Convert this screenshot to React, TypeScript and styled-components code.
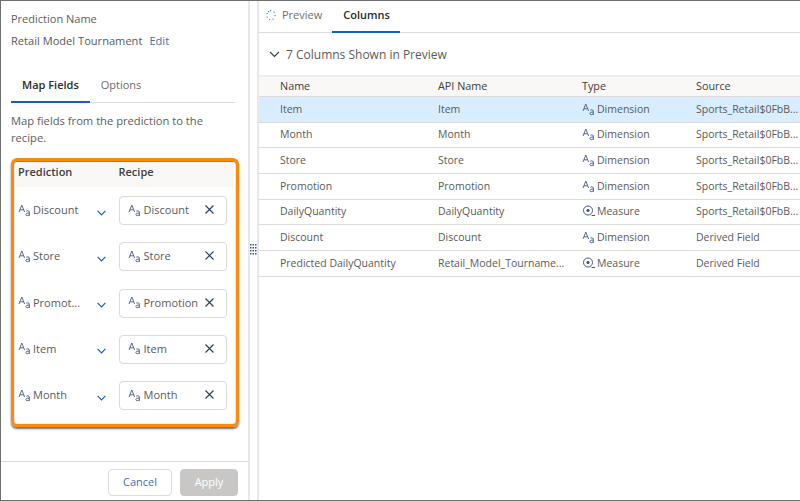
import React from 'react';
import styled, { createGlobalStyle } from 'styled-components';

const GlobalStyle = createGlobalStyle`
    html, body {
        margin: 0;
        padding: 0;
        background: #fff;
        font-family: "Open Sans", "Noto Sans", sans-serif;
        color: #4a4a4a;
    }
`;

const Frame = styled.div`
    box-sizing: border-box;
    display: flex;
    width: 800px;
    height: 501px;
    overflow: hidden;
    border-top: 1px solid #6f6f6f;
    border-left: 1px solid #6f6f6f;
    border-bottom: 1px solid #6f6f6f;
    background: #fff;
`;

const Sidebar = styled.aside`
    box-sizing: border-box;
    display: flex;
    flex-direction: column;
    flex: none;
    width: 247px;
    height: 100%;
`;

const SidebarBody = styled.div`
    flex: 1;
    padding: 11px 12px 0 10px;
`;

const FieldLabel = styled.div`
    font-size: 11px;
    line-height: 14px;
    color: #5e5e5e;
`;

const NameRow = styled.div`
    display: flex;
    gap: 7px;
    margin-top: 8px;
    font-size: 11.1px;
    line-height: 14px;
    color: #5a5a5a;
`;

const EditLink = styled.span`
    color: #3f6ea8;
`;

const Tabs = styled.div`
    display: flex;
    margin-top: 23px;
    width: 224px;
    border-bottom: 1px solid #dddbda;
`;

const SideTab = styled.div<{ $active?: boolean }>`
    box-sizing: border-box;
    height: 32px;
    line-height: 27px;
    padding: 0 11px;
    font-size: 11px;
    margin-bottom: -1px;
    color: ${p => (p.$active ? '#2b2b2b' : '#6d6d6d')};
    font-weight: ${p => (p.$active ? 600 : 400)};
    border-bottom: 2px solid ${p => (p.$active ? '#0f5fc8' : 'transparent')};
`;

const Hint = styled.p`
    margin: 9px 0 0;
    font-size: 11.2px;
    line-height: 17px;
    color: #5e5e5e;
`;

const Highlight = styled.div`
    box-sizing: border-box;
    width: 228px;
    height: 269px;
    margin-top: 12px;
    border: 3px solid #fb8b0c;
    border-radius: 6px;
    box-shadow: 0 2px 2px rgba(50, 50, 50, 0.7), inset 0 1px 1px rgba(40, 40, 40, 0.6), inset 0 0 1px rgba(40, 40, 40, 0.5);
    padding: 1px 0 0 2px;
`;

const MapHead = styled.div`
    display: grid;
    grid-template-columns: 100.500px 1fr;
    height: 25px;
    box-sizing: border-box;
    padding: 0 0 6px 2px;
    margin-right: 2px;
    align-items: center;
    background: #f9f8f7;
    font-size: 11px;
    font-weight: 600;
    color: #3e3e3c;
`;

const MapList = styled.div`
    display: flex;
    flex-direction: column;
    gap: 17.300px;
    margin-top: 9px;
`;

const MapRow = styled.div`
    display: flex;
    align-items: center;
    height: 29px;
    padding-left: 2px;
`;

const Source = styled.div`
    display: flex;
    align-items: center;
    gap: 1px;
    width: 70px;
    padding-bottom: 2px;
    font-size: 11px;
    color: #5a5a5a;
    white-space: nowrap;
`;

const ChevronSlot = styled.div`
    display: flex;
    justify-content: center;
    width: 26px;
    margin-top: 4px;
`;

const Pill = styled.div`
    box-sizing: border-box;
    display: flex;
    align-items: center;
    width: 108px;
    height: 29px;
    margin-left: 4.500px;
    padding: 0 12px 2px 8px;
    gap: 2px;
    border: 1px solid #dddbda;
    border-radius: 4px;
    font-size: 11px;
    color: #5a5a5a;
`;

const PillText = styled.span`
    flex: 1;
    white-space: nowrap;
`;

const Footer = styled.div`
    display: flex;
    justify-content: flex-end;
    gap: 8px;
    height: 39px;
    padding: 7px 10px 0 0;
    box-sizing: border-box;
    border-top: 1px solid #dddbda;
`;

const Button = styled.div<{ $disabled?: boolean }>`
    box-sizing: border-box;
    height: 27px;
    line-height: 23px;
    text-align: center;
    border-radius: 4px;
    font-size: 11px;
    width: ${p => (p.$disabled ? '58px' : '64px')};
    border: 1px solid ${p => (p.$disabled ? '#c9c7c5' : '#dddbda')};
    background: ${p => (p.$disabled ? '#c9c7c5' : '#fff')};
    color: ${p => (p.$disabled ? '#fff' : '#3f6ea8')};
`;

const Gutter = styled.div`
    box-sizing: border-box;
    display: flex;
    align-items: center;
    justify-content: center;
    flex: none;
    width: 11px;
    padding-bottom: 2px;
    background: #fff;
    border-left: 2px solid #e9e8e8;
    border-right: 2px solid #e9e8e8;
`;

const Main = styled.main`
    flex: 1;
    min-width: 0;
`;

const MainTabs = styled.div`
    display: flex;
    height: 32px;
    padding-left: 7px;
    box-sizing: border-box;
    border-bottom: 1px solid #dddbda;
`;

const MainTab = styled.div<{ $active?: boolean }>`
    display: flex;
    align-items: center;
    gap: 6px;
    height: 32px;
    box-sizing: border-box;
    font-size: 11px;
    color: ${p => (p.$active ? '#2b2b2b' : '#6d6d6d')};
    font-weight: ${p => (p.$active ? 600 : 400)};
    padding: ${p => (p.$active ? '0 10px 3px 11px' : '0 10px 3px 0')};
    border-bottom: 2px solid ${p => (p.$active ? '#0f5fc8' : 'transparent')};
`;

const SectionHead = styled.div`
    display: flex;
    align-items: center;
    gap: 6px;
    height: 42px;
    padding-left: 10px;
    font-size: 12px;
    color: #5a5a5a;
`;

const Table = styled.div`
    border-top: 2px solid #eeedec;
`;

const Row = styled.div<{ $head?: boolean; $selected?: boolean }>`
    box-sizing: border-box;
    display: grid;
    grid-template-columns: 158px 144px 114px 1fr;
    align-items: center;
    height: ${p => (p.$head ? '20px' : '25.700px')};
    padding: 0 0 1.500px 21px;
    font-size: ${p => (p.$head ? '10.800px' : '10.500px')};
    white-space: nowrap;
    border-bottom: 1px solid #dddbda;
    color: ${p => (p.$head ? '#3e3e3c' : '#5a5a5a')};
    font-weight: ${p => (p.$head ? 500 : 400)};
    background: ${p => (p.$head ? '#f9f8f7' : p.$selected ? '#d8edff' : '#fff')};
`;

const TypeCell = styled.span`
    display: flex;
    align-items: center;
    gap: 1px;
`;

const TypeGlyph = () => (
    <svg width="14" height="14" viewBox="0 0 14 14" fill="none" stroke="#44598a" strokeWidth="0.9">
        <path d="M1 9 3.8 2 6.6 9M2 6.8h3.6" />
        <path d="M8.2 8.4c.4-.8 3-.9 3.1.5V13M11.3 10.2c-2-.3-3.4.1-3.4 1.4 0 1.500 2.400 1.500 3.400 0" />
    </svg>
);

const MeasureGlyph = () => (
    <svg width="14" height="14" viewBox="0 0 14 14" fill="none" stroke="#44598a" strokeWidth="1">
        <circle cx="6" cy="6.500" r="4.500" />
        <circle cx="6" cy="6.500" r="1.200" fill="#44598a" />
        <path d="M9.500 11.500h3.500" />
    </svg>
);

const Chevron = () => (
    <svg width="9" height="6" viewBox="0 0 9 6" fill="none" stroke="#0f5fc8" strokeWidth="1.200">
        <path d="M.6.8 4.500 4.800 8.400.8" />
    </svg>
);

const Cross = () => (
    <svg width="9" height="9" viewBox="0 0 9 9" fill="none" stroke="#24405f" strokeWidth="1.100">
        <path d="M.5.5 8.500 8.500M8.500.5.500 8.500" />
    </svg>
);

const Grip = () => (
    <svg width="7" height="11" viewBox="0 0 7 11" fill="#3d5688">
        {[0, 3, 6, 9].map(y => [0, 2.500, 5].map(x => <rect key={`${x}-${y}`} x={x} y={y} width="1.500" height="1.500" />))}
    </svg>
);

const Spinner = () => (
    <svg width="10" height="10" viewBox="0 0 10 10" fill="#4c86d0">
        {[[4, 0], [7.500, 1.500], [8.500, 5], [6.500, 8.500], [3, 9], [.5, 6.500], [.5, 3], [2, 1]].map(([x, y]) => (
            <rect key={`${x}-${y}`} x={x} y={y} width="1.200" height="1.200" />
        ))}
    </svg>
);

const mappings = [
    { source: 'Discount', target: 'Discount' },
    { source: 'Store', target: 'Store' },
    { source: 'Promot...', target: 'Promotion' },
    { source: 'Item', target: 'Item' },
    { source: 'Month', target: 'Month' },
];

const retail = 'Sports_Retail$0FbB...';

const columns = [
    { name: 'Item', api: 'Item', type: 'Dimension', source: retail, selected: true },
    { name: 'Month', api: 'Month', type: 'Dimension', source: retail },
    { name: 'Store', api: 'Store', type: 'Dimension', source: retail },
    { name: 'Promotion', api: 'Promotion', type: 'Dimension', source: retail },
    { name: 'DailyQuantity', api: 'DailyQuantity', type: 'Measure', source: retail },
    { name: 'Discount', api: 'Discount', type: 'Dimension', source: 'Derived Field' },
    { name: 'Predicted DailyQuantity', api: 'Retail_Model_Tourname...', type: 'Measure', source: 'Derived Field' },
];

export default function App() {
    return (
        <>
            <GlobalStyle />
            <Frame>
                <Sidebar>
                    <SidebarBody>
                        <FieldLabel>Prediction Name</FieldLabel>
                        <NameRow>
                            Retail Model Tournament <EditLink>Edit</EditLink>
                        </NameRow>
                        <Tabs>
                            <SideTab $active>Map Fields</SideTab>
                            <SideTab>Options</SideTab>
                        </Tabs>
                        <Hint>Map fields from the prediction to the recipe.</Hint>
                        <Highlight>
                            <MapHead>
                                <span>Prediction</span>
                                <span>Recipe</span>
                            </MapHead>
                            <MapList>
                                {mappings.map(m => (
                                    <MapRow key={m.target}>
                                        <Source>
                                            <TypeGlyph />
                                            {m.source}
                                        </Source>
                                        <ChevronSlot>
                                            <Chevron />
                                        </ChevronSlot>
                                        <Pill>
                                            <TypeGlyph />
                                            <PillText>{m.target}</PillText>
                                            <Cross />
                                        </Pill>
                                    </MapRow>
                                ))}
                            </MapList>
                        </Highlight>
                    </SidebarBody>
                    <Footer>
                        <Button>Cancel</Button>
                        <Button $disabled>Apply</Button>
                    </Footer>
                </Sidebar>
                <Gutter>
                    <Grip />
                </Gutter>
                <Main>
                    <MainTabs>
                        <MainTab>
                            <Spinner />
                            Preview
                        </MainTab>
                        <MainTab $active>Columns</MainTab>
                    </MainTabs>
                    <SectionHead>
                        <svg width="11" height="7" viewBox="0 0 11 7" fill="none" stroke="#3e3e3c" strokeWidth="1.200">
                            <path d="M1 1l4.500 4.500L10 1" />
                        </svg>
                        7 Columns Shown in Preview
                    </SectionHead>
                    <Table>
                        <Row $head>
                            <span>Name</span>
                            <span>API Name</span>
                            <span>Type</span>
                            <span>Source</span>
                        </Row>
                        {columns.map(c => (
                            <Row key={c.name} $selected={c.selected}>
                                <span>{c.name}</span>
                                <span>{c.api}</span>
                                <TypeCell>
                                    {c.type === 'Measure' ? <MeasureGlyph /> : <TypeGlyph />}
                                    {c.type}
                                </TypeCell>
                                <span>{c.source}</span>
                            </Row>
                        ))}
                    </Table>
                </Main>
            </Frame>
        </>
    );
}
